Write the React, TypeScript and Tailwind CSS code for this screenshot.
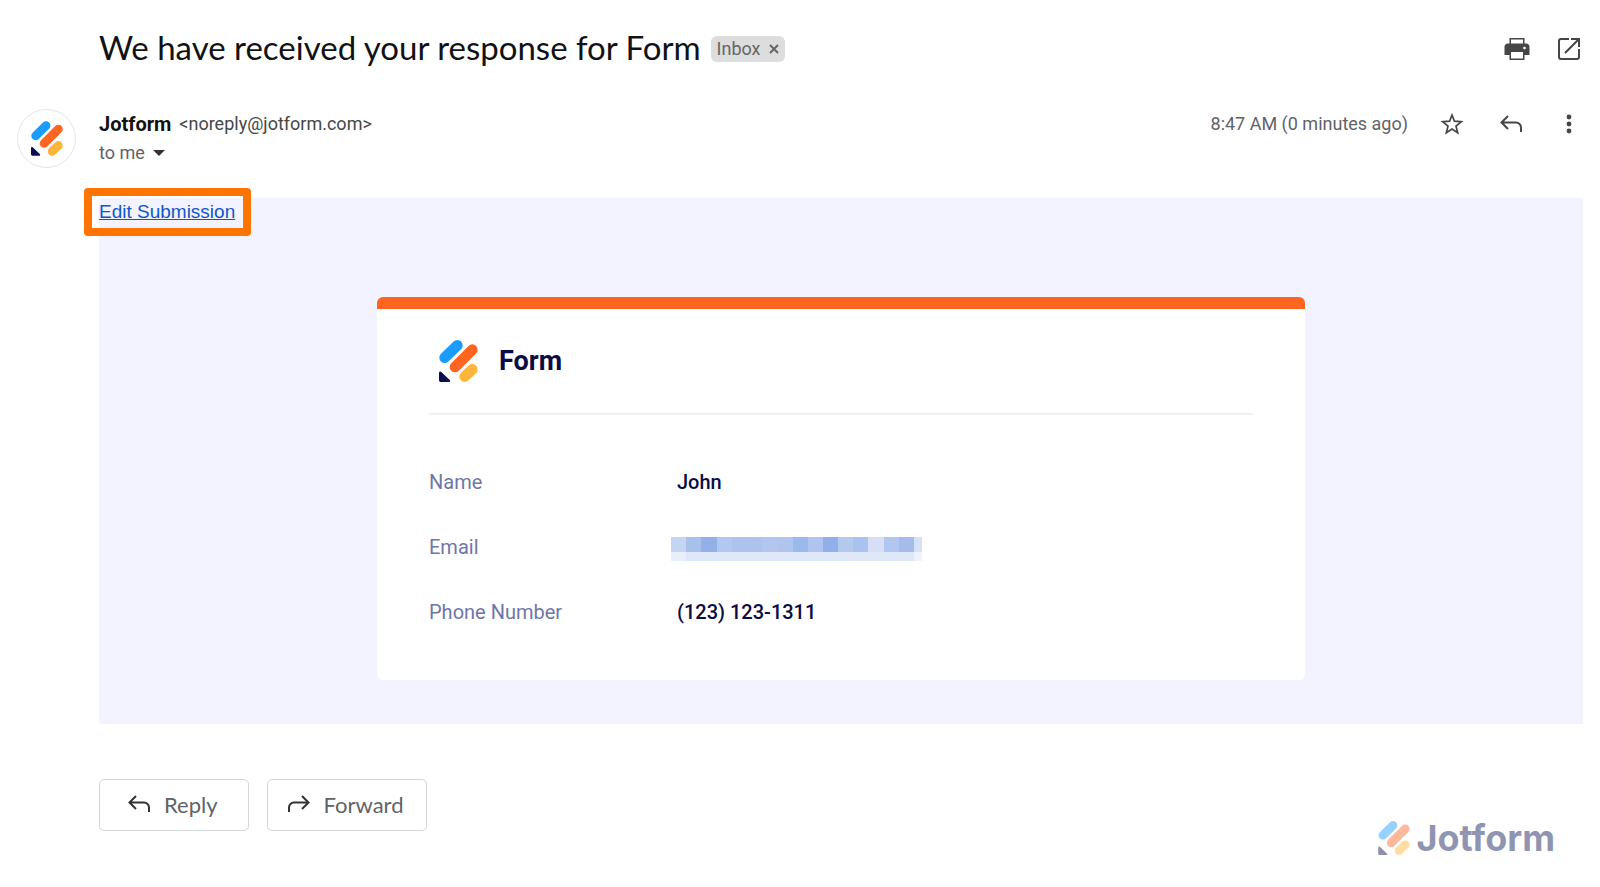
import React from 'react';

const JotformMark: React.FC<{ className?: string }> = ({ className }) => (
  <svg viewBox="0 0 117 126" className={className} fill="none" strokeWidth="32" strokeLinecap="round" aria-hidden="true">
    <path d="M55 16 17 53" stroke="#1a9bff" />
    <path d="M100 29 48 81" stroke="#ff6420" />
    <path d="M100 88 77 110" stroke="#ffb53a" />
    <path d="M0 99c0-5 4-6 7-3l25 24c3 3 2 6-2 6H5c-3 0-5-2-5-5z" fill="#0a0c50" />
  </svg>
);

const ReplyIcon: React.FC<{ className?: string }> = ({ className }) => (
  <svg viewBox="0 0 22 18" className={className} fill="none" stroke="currentColor" strokeWidth="2" aria-hidden="true">
    <path d="M8 1 1.500 7.500 8 14M2 7.500h14a5 5 0 0 1 5 5V17" />
  </svg>
);

const PrintIcon = () => (
  <svg viewBox="0 0 26 22" className="h-[22px] w-[26px]" aria-hidden="true">
    <path
      fill="currentColor"
      fillRule="evenodd"
      d="M5.500 0h15v5.500h1.500A3.500 3.500 0 0 1 25.500 9v8h-5v5h-15v-5h-5V9A3.500 3.500 0 0 1 4 5.500h1.500zm1.500 1.500v4h12v-4zm0 12.500v6.500h12V14zm13.500-5.300a1.300 1.300 0 1 0 0 2.600 1.300 1.300 0 0 0 0-2.600z"
    />
  </svg>
);

const OpenIcon = () => (
  <svg viewBox="0 0 22 22" className="size-[22px]" fill="none" stroke="currentColor" strokeWidth="2" aria-hidden="true">
    <path d="M11 1H3a2 2 0 0 0-2 2v16a2 2 0 0 0 2 2h16a2 2 0 0 0 2-2v-8M13 1h8v8M20.500 1.500 7 15" />
  </svg>
);

const StarIcon = () => (
  <svg viewBox="0 0 24 24" className="size-6" fill="none" stroke="currentColor" strokeWidth="1.700" aria-hidden="true">
    <path d="m12 3 2.400 6.200 6.900.5-5.300 4.400 1.700 6.700-5.700-3.700-5.700 3.700L8 14.100 2.700 9.700l6.900-.5z" />
  </svg>
);

const MoreIcon = () => (
  <svg viewBox="0 0 6 20" className="h-5 w-1.5" fill="currentColor" aria-hidden="true">
    <circle cx="3" cy="3" r="2.400" />
    <circle cx="3" cy="10" r="2.400" />
    <circle cx="3" cy="17" r="2.400" />
  </svg>
);

// Pixelated cover over the submitter's address
const mosaic = [
  'bg-[#c3d5f0]',
  'bg-[#a9c1ea]',
  'bg-[#95afe8]',
  'bg-[#b3c8f0]',
  'bg-[#adc3ee]',
  'bg-[#adc3ee]',
  'bg-[#b4c6ef]',
  'bg-[#afc5ec]',
  'bg-[#9db8ea]',
  'bg-[#b1c4ef]',
  'bg-[#93afe8]',
  'bg-[#b5c9ee]',
  'bg-[#a9c2ee]',
  'bg-[#d6dff5]',
  'bg-[#b1c6f0]',
  'bg-[#a5bcea]',
];

const RedactedEmail = () => (
  <div className="w-[251px] pt-1" aria-label="Hidden email">
    <div className="flex h-[15px]">
      {mosaic.map((color, i) => (
        <div key={i} className={`flex-1 ${color}`}></div>
      ))}
      <div className="w-2 bg-[#d5e2f6]"></div>
    </div>
    <div className="flex h-[9px]">
      <div className="w-[15px] bg-[#e8eefa]"></div>
      <div className="flex-1 bg-[#dfe8f8]"></div>
      <div className="w-2 bg-[#eef2fb]"></div>
    </div>
  </div>
);

const fields = [
  { label: 'Name', value: 'John' },
  { label: 'Email', value: null },
  { label: 'Phone Number', value: '(123) 123-1311' },
];

export default function App() {
  return (
    <div className="min-h-screen bg-white pr-[17px] font-['Roboto',sans-serif] text-[#444746]">
      {/* Subject */}
      <header className="flex h-[97px] items-center pl-[99px]">
        <h1 className="pb-1 font-['Lato',sans-serif] text-[33px] leading-10 text-[#101214]">
          We have received your response for Form
        </h1>
        <div className="ml-2.5 flex h-[26px] items-center gap-2 rounded-md bg-[#dddddd] px-1.5 text-lg text-[#666666]">
          Inbox
          <button type="button" aria-label="Remove label">
            <svg viewBox="0 0 10 10" className="size-2.5" stroke="currentColor" strokeWidth="2" aria-hidden="true">
              <path d="m1 1 8 8M9 1 1 9" />
            </svg>
          </button>
        </div>
        <div className="ml-auto flex items-center gap-7 pr-[3px]">
          <button type="button" aria-label="Print"><PrintIcon /></button>
          <button type="button" aria-label="Open in new window"><OpenIcon /></button>
        </div>
      </header>

      {/* Sender */}
      <section className="flex items-start pt-3 pl-[17px]">
        <div className="mr-[23px] flex size-[59px] items-center justify-center rounded-full border border-[#e3e3ee]">
          <JotformMark className="h-[35px] w-8" />
        </div>
        <div>
          <div className="flex h-[29px] items-center gap-2">
            <span className="text-xl font-bold text-[#111111]">Jotform</span>
            <span className="text-lg">&lt;noreply@jotform.com&gt;</span>
          </div>
          <button type="button" className="flex h-[29px] items-center gap-2 text-lg text-[#5f6368]">
            to me
            <svg viewBox="0 0 12 6" className="h-1.5 w-3 text-[#333333]" fill="currentColor" aria-hidden="true">
              <path d="M0 0h12L6 6z" />
            </svg>
          </button>
        </div>
        <div className="ml-auto flex h-[29px] items-center pr-[11px]">
          <span className="text-lg text-[#5f6368]">8:47 AM (0 minutes ago)</span>
          <button type="button" aria-label="Star" className="ml-8"><StarIcon /></button>
          <button type="button" aria-label="Reply" className="ml-9"><ReplyIcon className="h-[18px] w-[22px]" /></button>
          <button type="button" aria-label="More" className="ml-11"><MoreIcon /></button>
        </div>
      </section>

      {/* Message body */}
      <main className="mt-[30px] ml-[99px] bg-[#f3f3ff] pb-11">
        <div className="relative inline-block h-[27px]">
          <a href="#edit" className="font-['Liberation_Sans',sans-serif] text-[19px] leading-[27px] text-[#1155cc] underline">
            Edit Submission
          </a>
          <div className="pointer-events-none absolute -top-2.5 -right-4 -bottom-[11px] -left-[15px] rounded border-8 border-[#ff7300]"></div>
        </div>

        <div className="mx-auto mt-[72px] max-w-[928px] rounded-md border-t-12 border-[#ff6420] bg-white px-[52px] pb-9">
          <div className="flex h-[106px] items-center border-b-2 border-[#efeff0] pl-2.5">
            <JotformMark className="h-[42px] w-[39px]" />
            <h2 className="ml-[21px] text-[27px] font-bold text-[#0a0c46]">Form</h2>
          </div>
          <table className="mt-[34px] w-full text-left text-xl">
            <tbody>
              {fields.map((field) => (
                <tr key={field.label} className="h-[65px]">
                  <th scope="row" className="w-[242px] p-0 font-normal text-[#6f76a7]">{field.label}</th>
                  <td className="p-0 font-medium text-[#0a0c46]">
                    {field.value ? <span className="pl-1.5">{field.value}</span> : <RedactedEmail />}
                  </td>
                </tr>
              ))}
            </tbody>
          </table>
        </div>
      </main>

      {/* Actions */}
      <footer className="mt-[55px] ml-[99px] flex items-start justify-between pr-7">
        <div className="flex gap-[18px] font-['Lato',sans-serif] text-[22px] text-[#5f6368]">
          <button type="button" className="flex h-[52px] items-center gap-3.5 rounded-[5px] border border-[#d3d6da] pr-[30px] pb-0.5 pl-7">
            <ReplyIcon className="h-[18px] w-[22px] text-[#333333]" />
            Reply
          </button>
          <button type="button" className="flex h-[52px] items-center gap-3.5 rounded-[5px] border border-[#d3d6da] pr-[22px] pb-0.5 pl-5">
            <ReplyIcon className="h-[18px] w-[22px] -scale-x-100 text-[#333333]" />
            Forward
          </button>
        </div>
        <div className="mt-[39px] flex h-10 items-center gap-1.5 opacity-45">
          <JotformMark className="h-[34px] w-8" />
          <span className="font-['Inter',sans-serif] text-[36px] leading-10 font-bold text-[#0a1551]">Jotform</span>
        </div>
      </footer>
    </div>
  );
}
